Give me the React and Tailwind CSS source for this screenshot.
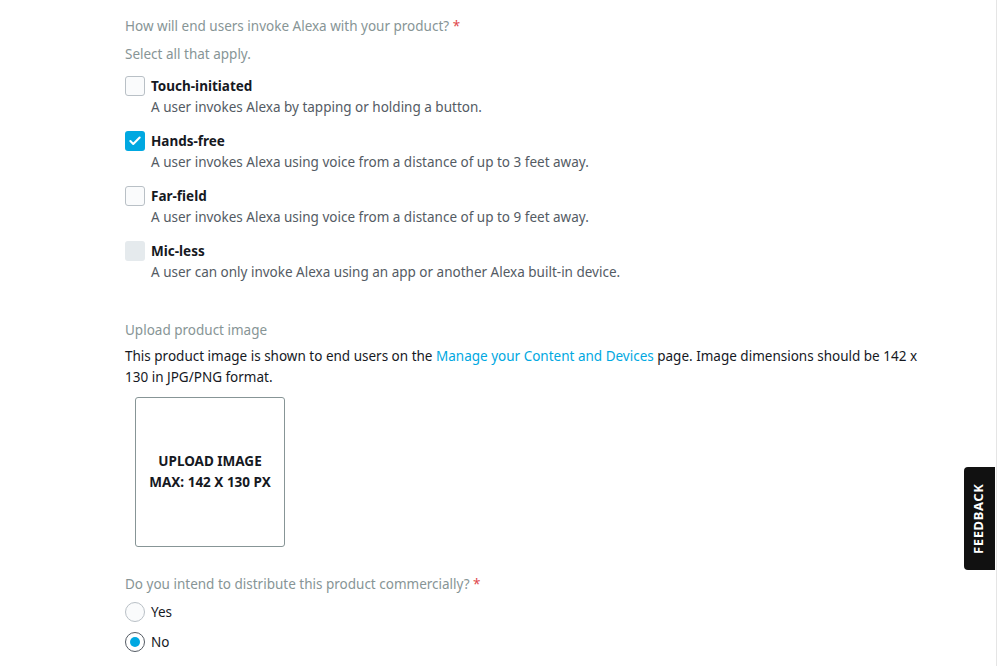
import { Check } from 'lucide-react';

const options = [
  { id: 'touch', label: 'Touch-initiated', desc: 'A user invokes Alexa by tapping or holding a button.', state: 'off' },
  { id: 'hands', label: 'Hands-free', desc: 'A user invokes Alexa using voice from a distance of up to 3 feet away.', state: 'on' },
  { id: 'far', label: 'Far-field', desc: 'A user invokes Alexa using voice from a distance of up to 9 feet away.', state: 'off' },
  { id: 'mic', label: 'Mic-less', desc: 'A user can only invoke Alexa using an app or another Alexa built-in device.', state: 'disabled' },
];

function Box({ state }) {
  if (state === 'on') {
    return (
      <div className="w-5 h-5 rounded-[3px] bg-[#00a8e1] flex items-center justify-center shrink-0">
        <Check size={14} strokeWidth={3.5} className="text-white" />
      </div>
    );
  }
  if (state === 'disabled') {
    return <div className="w-5 h-5 rounded-[3px] bg-[#e5eaed] shrink-0" />;
  }
  return <div className="w-5 h-5 rounded-[3px] border border-[#b9c0c6] bg-[#fafbfc] shrink-0" />;
}

export default function App() {
  return (
    <div className="relative w-[997px] h-[666px] bg-white overflow-hidden border-r border-[#e5e5e5] font-['Noto_Sans',sans-serif] text-[13.5px]">
      <div className="pl-[125px] pr-[70px] pt-[16px]">
        {/* QUESTION 1 */}
        <p className="text-[#879596] leading-5">
          How will end users invoke Alexa with your product? <span className="text-[#e0474c]">*</span>
        </p>
        <p className="text-[#879596] leading-5 mt-2">Select all that apply.</p>

        <div className="mt-[12px] space-y-[13px]">
          {options.map(o => (
            <div key={o.id}>
              <div className="flex items-center gap-[6px] h-5">
                <Box state={o.state} />
                <span className="font-bold text-[#16191f]">{o.label}</span>
              </div>
              <p className="pl-[26px] text-[#545b64] leading-[22px]">{o.desc}</p>
            </div>
          ))}
        </div>

        {/* UPLOAD */}
        <p className="text-[#879596] leading-5 mt-[37px]">Upload product image</p>
        <p className="text-[#16191f] leading-[21px] mt-[6px] max-w-[797px]">
          This product image is shown to end users on the <span className="text-[#00a8e1]">Manage your Content and Devices</span> page. Image dimensions should be 142 x 130 in JPG/PNG format.
        </p>
        <div className="ml-[10px] mt-[9px] w-[150px] h-[150px] border border-[#879596] rounded-[3px] flex flex-col items-center justify-center font-bold text-[#16191f] leading-[21px]">
          <span>UPLOAD IMAGE</span>
          <span>MAX: 142 X 130 PX</span>
        </div>

        {/* COMMERCIAL */}
        <p className="text-[#879596] leading-5 mt-[27px]">
          Do you intend to distribute this product commercially? <span className="text-[#e0474c]">*</span>
        </p>
        <div className="mt-[8px] space-y-[10px]">
          <div className="flex items-center gap-[6px] h-5">
            <div className="w-5 h-5 rounded-full border border-[#b9c0c6] bg-[#fafbfc]" />
            <span className="text-[#16191f]">Yes</span>
          </div>
          <div className="flex items-center gap-[6px] h-5">
            <div className="w-5 h-5 rounded-full border border-[#545b64] bg-white flex items-center justify-center">
              <div className="w-[10px] h-[10px] rounded-full bg-[#00a8e1]" />
            </div>
            <span className="text-[#16191f]">No</span>
          </div>
        </div>
      </div>

      {/* FEEDBACK TAB */}
      <div className="absolute right-[1px] top-[467px] w-[31px] h-[103px] bg-[#111] rounded-l-[4px] flex items-center justify-center">
        <span className="-rotate-90 whitespace-nowrap text-white font-bold text-[13px] tracking-[0.6px]">FEEDBACK</span>
      </div>
    </div>
  );
}
